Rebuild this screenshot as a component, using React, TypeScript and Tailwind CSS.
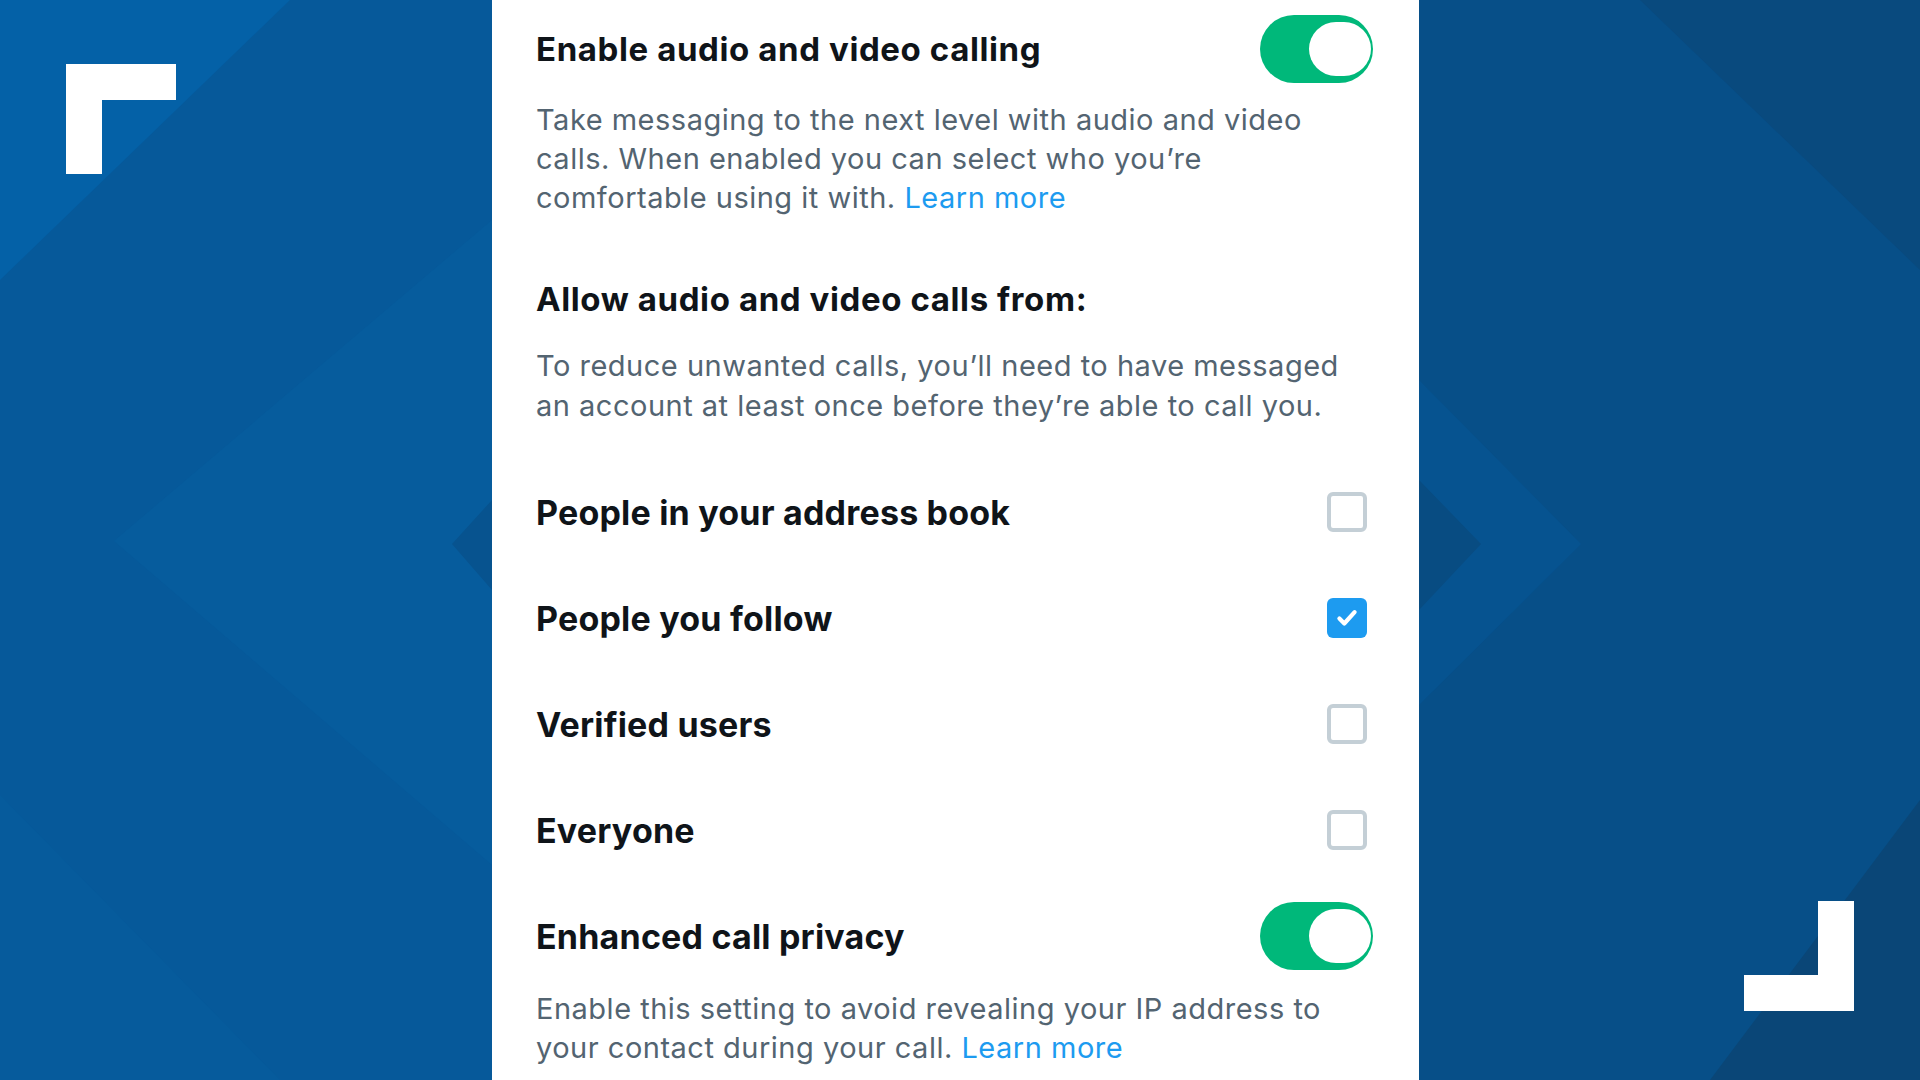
import { useState } from "react";

type ToggleProps = {
  on: boolean;
  onChange: (v: boolean) => void;
};

function Toggle({ on, onChange }: ToggleProps) {
  return (
    <button
      type="button"
      onClick={() => onChange(!on)}
      className={`flex h-[68px] w-[113px] shrink-0 items-center rounded-full px-[2px] ${
        on ? "justify-end bg-[#00b87a]" : "justify-start bg-[#cfd9de]"
      }`}
    >
      <span className="h-[54px] w-[62px] rounded-full bg-white" />
    </button>
  );
}

type CheckProps = {
  checked: boolean;
  onChange: (v: boolean) => void;
};

function Check({ checked, onChange }: CheckProps) {
  if (checked) {
    return (
      <button
        type="button"
        onClick={() => onChange(false)}
        className="flex h-[40px] w-[40px] items-center justify-center rounded-[6px] bg-[#1d9bf0]"
      >
        <svg viewBox="0 0 24 24" className="h-[28px] w-[28px]" fill="none">
          <path
            d="M5.5 12.5l4.2 4.2L18.5 7"
            stroke="white"
            strokeWidth="3.6"
            strokeLinecap="round"
            strokeLinejoin="round"
          />
        </svg>
      </button>
    );
  }
  return (
    <button
      type="button"
      onClick={() => onChange(true)}
      className="h-[40px] w-[40px] rounded-[6px] border-[4px] border-[#c4cfd6] bg-white"
    />
  );
}

const audiences = [
  { id: "book", label: "People in your address book" },
  { id: "follow", label: "People you follow" },
  { id: "verified", label: "Verified users" },
  { id: "everyone", label: "Everyone" },
];

function CornerMark({ flip }: { flip?: boolean }) {
  return (
    <svg viewBox="0 0 110 110" className="h-[110px] w-[110px]">
      <path
        d={flip ? "M110 0V110H0V74H74V0Z" : "M0 0H110V36H36V110H0Z"}
        fill="white"
      />
    </svg>
  );
}

// angled backdrop shapes behind the settings card
function Backdrop() {
  return (
    <svg
      className="absolute inset-0 h-full w-full"
      viewBox="0 0 1920 1080"
      preserveAspectRatio="none"
    >
      <rect width="1920" height="1080" fill="#06599a" />
      <polygon points="0,0 290,0 0,280" fill="#0461a7" />
      <polygon points="492,220 114,541 492,865" fill="#065c9d" />
      <polygon points="492,500 452,544 492,590" fill="#07538f" />
      <polygon points="0,795 0,1080 280,1080" fill="#065b9c" />
      <rect x="1419" width="501" height="1080" fill="#074f88" />
      <polygon points="1640,0 1920,0 1920,270" fill="#094a7e" />
      <polygon points="1419,380 1581,544 1419,705" fill="#065390" />
      <polygon points="1419,480 1481,544 1419,610" fill="#084c82" />
      <polygon points="1920,800 1920,1080 1710,1080" fill="#0a4677" />
    </svg>
  );
}

export default function App() {
  const [calling, setCalling] = useState(true);
  const [privacy, setPrivacy] = useState(true);
  const [picked, setPicked] = useState<Record<string, boolean>>({
    book: false,
    follow: true,
    verified: false,
    everyone: false,
  });

  return (
    <div
      className="relative h-[1080px] w-[1920px] overflow-hidden"
      style={{ fontFamily: "Inter, 'Noto Sans', sans-serif" }}
    >
      <Backdrop />
      <div className="relative grid h-full grid-cols-[492px_927px_1fr]">
        <div className="pl-[66px] pt-[64px]">
          <CornerMark />
        </div>

        <main className="h-full overflow-hidden bg-white pl-[44px] pr-[46px]">
          <div className="flex items-center justify-between pt-[15px]">
            <h2 className="text-[33px] font-bold leading-[38px] tracking-[0.6px] text-[#0f1419]">
              Enable audio and video calling
            </h2>
            <Toggle on={calling} onChange={setCalling} />
          </div>
          <p className="mt-[17px] text-[29px] leading-[39px] tracking-[0.5px] text-[#536471]">
            Take messaging to the next level with audio and video
            <br />
            calls. When enabled you can select who you’re
            <br />
            comfortable using it with.{" "}
            <a className="text-[#1d9bf0]">Learn more</a>
          </p>

          <h2 className="mt-[63px] text-[33px] font-bold leading-[38px] tracking-[0.6px] text-[#0f1419]">
            Allow audio and video calls from:
          </h2>
          <p className="mt-[28px] text-[29px] leading-[40px] tracking-[0.5px] text-[#536471]">
            To reduce unwanted calls, you’ll need to have messaged
            <br />
            an account at least once before they’re able to call you.
          </p>

          <ul className="mt-[33px] pr-[6px]">
            {audiences.map((a) => (
              <li
                key={a.id}
                className="flex h-[106px] items-center justify-between"
              >
                <span className="text-[34px] font-bold tracking-[0.2px] text-[#0f1419]">
                  {a.label}
                </span>
                <Check
                  checked={picked[a.id]}
                  onChange={(v) => setPicked({ ...picked, [a.id]: v })}
                />
              </li>
            ))}
          </ul>

          <div className="flex h-[106px] items-center justify-between">
            <span className="text-[34px] font-bold tracking-[0.2px] text-[#0f1419]">
              Enhanced call privacy
            </span>
            <Toggle on={privacy} onChange={setPrivacy} />
          </div>
          <p className="text-[29px] leading-[39px] tracking-[0.5px] text-[#536471]">
            Enable this setting to avoid revealing your IP address to
            <br />
            your contact during your call.{" "}
            <a className="text-[#1d9bf0]">Learn more</a>
          </p>
        </main>

        <div className="flex flex-col items-end justify-end pb-[69px] pr-[66px]">
          <CornerMark flip />
        </div>
      </div>
    </div>
  );
}
